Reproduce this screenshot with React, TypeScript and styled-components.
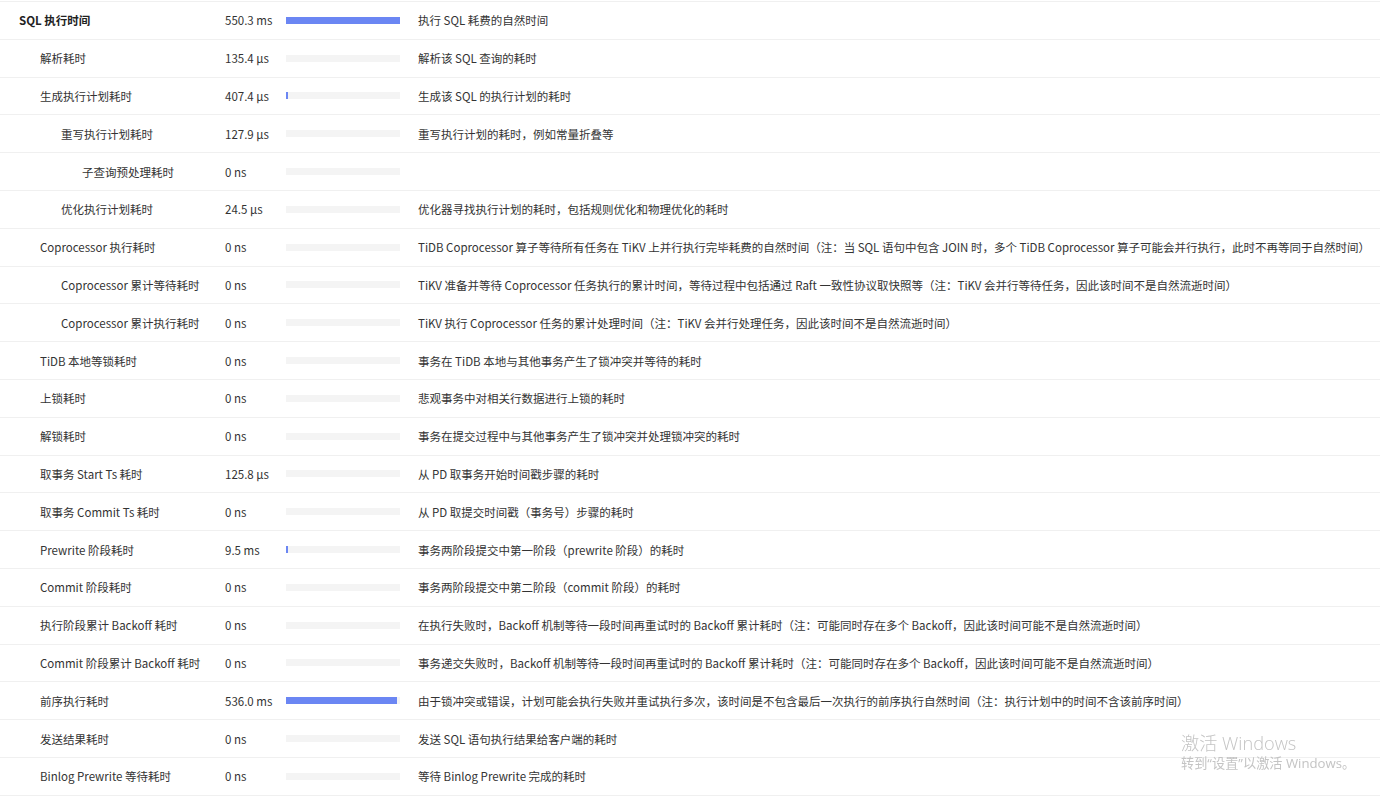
import React from "react";
import styled, { createGlobalStyle } from "styled-components";

const GlobalStyle = createGlobalStyle`
  html, body {
    margin: 0;
    padding: 0;
    background: #fff;
  }
  body {
    font-family: "Noto Sans CJK SC", "Noto Sans", sans-serif;
    color: #333;
  }
`;

type Item = {
  name: string;
  level: number;
  value: string;
  pct: number;
  desc: string;
  bold?: boolean;
};

const items: Item[] = [
  { name: "SQL 执行时间", level: 0, value: "550.3 ms", pct: 100, desc: "执行 SQL 耗费的自然时间", bold: true },
  { name: "解析耗时", level: 1, value: "135.4 μs", pct: 0, desc: "解析该 SQL 查询的耗时" },
  { name: "生成执行计划耗时", level: 1, value: "407.4 μs", pct: 0.1, desc: "生成该 SQL 的执行计划的耗时" },
  { name: "重写执行计划耗时", level: 2, value: "127.9 μs", pct: 0, desc: "重写执行计划的耗时，例如常量折叠等" },
  { name: "子查询预处理耗时", level: 3, value: "0 ns", pct: 0, desc: "" },
  { name: "优化执行计划耗时", level: 2, value: "24.5 μs", pct: 0, desc: "优化器寻找执行计划的耗时，包括规则优化和物理优化的耗时" },
  {
    name: "Coprocessor 执行耗时",
    level: 1,
    value: "0 ns",
    pct: 0,
    desc: "TiDB Coprocessor 算子等待所有任务在 TiKV 上并行执行完毕耗费的自然时间（注：当 SQL 语句中包含 JOIN 时，多个 TiDB Coprocessor 算子可能会并行执行，此时不再等同于自然时间）",
  },
  {
    name: "Coprocessor 累计等待耗时",
    level: 2,
    value: "0 ns",
    pct: 0,
    desc: "TiKV 准备并等待 Coprocessor 任务执行的累计时间，等待过程中包括通过 Raft 一致性协议取快照等（注：TiKV 会并行等待任务，因此该时间不是自然流逝时间）",
  },
  {
    name: "Coprocessor 累计执行耗时",
    level: 2,
    value: "0 ns",
    pct: 0,
    desc: "TiKV 执行 Coprocessor 任务的累计处理时间（注：TiKV 会并行处理任务，因此该时间不是自然流逝时间）",
  },
  { name: "TiDB 本地等锁耗时", level: 1, value: "0 ns", pct: 0, desc: "事务在 TiDB 本地与其他事务产生了锁冲突并等待的耗时" },
  { name: "上锁耗时", level: 1, value: "0 ns", pct: 0, desc: "悲观事务中对相关行数据进行上锁的耗时" },
  { name: "解锁耗时", level: 1, value: "0 ns", pct: 0, desc: "事务在提交过程中与其他事务产生了锁冲突并处理锁冲突的耗时" },
  { name: "取事务 Start Ts 耗时", level: 1, value: "125.8 μs", pct: 0, desc: "从 PD 取事务开始时间戳步骤的耗时" },
  { name: "取事务 Commit Ts 耗时", level: 1, value: "0 ns", pct: 0, desc: "从 PD 取提交时间戳（事务号）步骤的耗时" },
  { name: "Prewrite 阶段耗时", level: 1, value: "9.5 ms", pct: 1.7, desc: "事务两阶段提交中第一阶段（prewrite 阶段）的耗时" },
  { name: "Commit 阶段耗时", level: 1, value: "0 ns", pct: 0, desc: "事务两阶段提交中第二阶段（commit 阶段）的耗时" },
  {
    name: "执行阶段累计 Backoff 耗时",
    level: 1,
    value: "0 ns",
    pct: 0,
    desc: "在执行失败时，Backoff 机制等待一段时间再重试时的 Backoff 累计耗时（注：可能同时存在多个 Backoff，因此该时间可能不是自然流逝时间）",
  },
  {
    name: "Commit 阶段累计 Backoff 耗时",
    level: 1,
    value: "0 ns",
    pct: 0,
    desc: "事务递交失败时，Backoff 机制等待一段时间再重试时的 Backoff 累计耗时（注：可能同时存在多个 Backoff，因此该时间可能不是自然流逝时间）",
  },
  {
    name: "前序执行耗时",
    level: 1,
    value: "536.0 ms",
    pct: 97.4,
    desc: "由于锁冲突或错误，计划可能会执行失败并重试执行多次，该时间是不包含最后一次执行的前序执行自然时间（注：执行计划中的时间不含该前序时间）",
  },
  { name: "发送结果耗时", level: 1, value: "0 ns", pct: 0, desc: "发送 SQL 语句执行结果给客户端的耗时" },
  { name: "Binlog Prewrite 等待耗时", level: 1, value: "0 ns", pct: 0, desc: "等待 Binlog Prewrite 完成的耗时" },
];

const Table = styled.div`
  margin-top: 1px;
  border-top: 1px solid #f0f0f0;
`;

const Row = styled.div`
  display: grid;
  grid-template-columns: 225px 61px 114px 1fr;
  align-items: center;
  height: 37.8px;
  box-sizing: border-box;
  border-bottom: 1px solid #f0f0f0;
  font-size: 11.5px;
  line-height: 16px;
  white-space: nowrap;
`;

const Name = styled.div<{ $level: number; $bold?: boolean }>`
  padding-left: ${(p) => 19 + p.$level * 21}px;
  font-weight: ${(p) => (p.$bold ? 700 : 400)};
  color: ${(p) => (p.$bold ? "#222" : "#333")};
`;

const Value = styled.div`
  color: #333;
`;

const Track = styled.div`
  height: 7px;
  background: #f4f4f4;
`;

const Fill = styled.div`
  height: 100%;
  min-width: 2px;
  background: #6b86f3;
`;

const Desc = styled.div`
  padding-left: 18px;
  color: #333;
`;

const Watermark = styled.div`
  position: fixed;
  left: 1181px;
  top: 731px;
  color: #c4c4c4;
  pointer-events: none;
  font-family: "Open Sans", "Noto Sans CJK SC", sans-serif;
`;

const WmTitle = styled.div`
  font-size: 18.2px;
  font-weight: 300;
  line-height: 24px;
`;

const WmSub = styled.div`
  font-size: 13.2px;
  line-height: 17px;
`;

export default function App() {
  return (
    <>
      <GlobalStyle />
      <Table>
        {items.map((it) => (
          <Row key={it.name}>
            <Name $level={it.level} $bold={it.bold}>
              {it.name}
            </Name>
            <Value>{it.value}</Value>
            <Track>
              {it.pct > 0 && <Fill style={{ width: `${it.pct}%` }} />}
            </Track>
            <Desc>{it.desc}</Desc>
          </Row>
        ))}
      </Table>
      <Watermark>
        <WmTitle>激活 Windows</WmTitle>
        <WmSub>转到“设置”以激活 Windows。</WmSub>
      </Watermark>
    </>
  );
}
